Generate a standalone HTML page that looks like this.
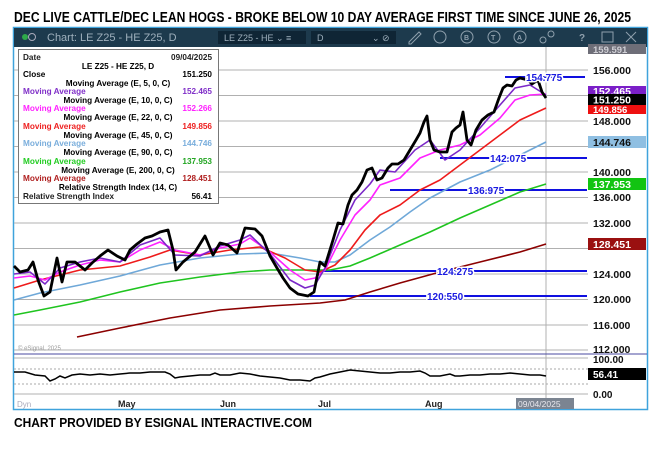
<!DOCTYPE html>
<html><head><meta charset="utf-8"><style>
body{margin:0;background:#fff;width:654px;height:448px;overflow:hidden;font-family:"Liberation Sans",sans-serif}
</style></head><body>
<svg width="654" height="448" viewBox="0 0 654 448" xmlns="http://www.w3.org/2000/svg" font-family="Liberation Sans, sans-serif">
<text x="14" y="22" font-size="14.5" font-weight="bold" textLength="617" lengthAdjust="spacingAndGlyphs">DEC LIVE CATTLE/DEC LEAN HOGS  -  BROKE BELOW 10 DAY AVERAGE FIRST TIME SINCE  JUNE 26, 2025</text>
<rect x="13.5" y="27.5" width="634" height="382" fill="#fff" stroke="#3fa3dc" stroke-width="1.5"/>
<rect x="14" y="28" width="633" height="19" fill="#1d3a4d"/>
<circle cx="25" cy="37" r="3" fill="#2ea84a"/><circle cx="32" cy="37" r="3.5" fill="none" stroke="#aab" stroke-width="1"/>
<text x="47" y="41" font-size="11" fill="#9fb0bd">Chart: LE Z25 - HE Z25, D</text>
<rect x="218" y="31" width="88" height="13" fill="#0f2535"/><text x="224" y="41" font-size="9" fill="#9fb0bd">LE Z25 - HE ⌄ ≡</text>
<rect x="311" y="31" width="85" height="13" fill="#0f2535"/><text x="317" y="41" font-size="9" fill="#9fb0bd">D</text>
<text x="372" y="41" font-size="9" fill="#9fb0bd">⌄ ⊘</text>
<g fill="none" stroke="#8fa0ad" stroke-width="1">
<path d="M409 42l10-10 2 2-10 10h-2z"/>
<circle cx="440" cy="37" r="6"/><circle cx="467" cy="37" r="6"/><circle cx="494" cy="37" r="6"/><circle cx="520" cy="37" r="6"/>
<circle cx="543" cy="40" r="3"/><circle cx="551" cy="34" r="3"/>
<rect x="602" y="32" width="11" height="10"/><path d="M626 32l10 10M636 32l-10 10"/>
</g>
<g font-size="7" fill="#8fa0ad" font-weight="bold"><text x="464" y="40">B</text><text x="491" y="40">T</text><text x="517" y="40">A</text><text x="579" y="41" font-size="10">?</text></g>
<g stroke="#b0b0b0" stroke-width="1">
<line x1="14" y1="70" x2="588" y2="70"/><line x1="14" y1="95.5" x2="588" y2="95.5"/><line x1="14" y1="121" x2="588" y2="121"/><line x1="14" y1="146.5" x2="588" y2="146.5"/><line x1="14" y1="172" x2="588" y2="172"/><line x1="14" y1="197.5" x2="588" y2="197.5"/><line x1="14" y1="223" x2="588" y2="223"/><line x1="14" y1="248.5" x2="588" y2="248.5"/><line x1="14" y1="274" x2="588" y2="274"/><line x1="14" y1="299.5" x2="588" y2="299.5"/><line x1="14" y1="325" x2="588" y2="325"/><line x1="14" y1="350" x2="588" y2="350"/>
<line x1="14" y1="358" x2="588" y2="358"/><line x1="14" y1="394" x2="588" y2="394"/>
<line x1="546" y1="47" x2="546" y2="398"/>
</g>
<line x1="14" y1="354" x2="647" y2="354" stroke="#4a4aa0" stroke-width="1"/>
<g stroke="#aaa" stroke-dasharray="2,2"><line x1="14" y1="369" x2="588" y2="369"/><line x1="14" y1="384" x2="588" y2="384"/></g>
<text x="18" y="350" font-size="6" fill="#999">© eSignal, 2025</text>
<g stroke="#1010e0" stroke-width="2">
<line x1="505" y1="77" x2="585" y2="77"/><line x1="440" y1="158" x2="587" y2="158"/><line x1="390" y1="190" x2="587" y2="190"/><line x1="320" y1="271" x2="587" y2="271"/><line x1="310" y1="296" x2="587" y2="296"/>
</g>
<g fill="none" stroke-width="1.6" stroke-linejoin="round">
<polyline stroke="#8b0000" points="77,337 120,328 170,318 220,310 270,306 320,303 345,300 370,292 400,283 440,272 480,262 520,252 546,244"/>
<polyline stroke="#1fc41f" points="14,315 40,310 80,302 120,292 160,283 200,277 240,272 270,270 300,270 330,270 350,266 370,258 400,245 430,232 460,218 490,205 520,192 546,184"/>
<polyline stroke="#6fa8d8" points="14,300 40,293 80,285 120,276 160,265 200,258 240,254 270,253 300,258 320,262 335,262 350,255 370,240 390,227 410,212 430,198 460,182 490,170 520,155 546,142"/>
<polyline stroke="#ee1b1b" points="14,288 40,280 80,270 120,266 150,257 170,250 200,255 230,250 260,247 285,258 305,270 320,272 335,265 350,250 365,230 380,215 400,205 420,190 440,180 460,165 480,150 500,135 520,120 546,108"/>
<polyline stroke="#ff22ff" points="14,278 30,276 45,280 60,272 80,265 100,260 120,262 140,250 160,242 175,250 200,255 220,248 240,244 250,238 270,252 290,270 305,280 315,278 325,270 340,240 355,215 370,200 380,185 400,178 420,158 440,150 460,145 480,135 500,118 515,100 530,95 546,94"/>
<polyline stroke="#7b28c8" points="14,274 30,272 45,284 60,268 80,262 100,258 120,262 140,245 160,238 175,255 200,256 220,246 240,240 250,235 270,254 290,280 305,288 315,285 325,268 340,230 355,200 370,184 380,170 395,172 415,150 430,140 445,160 460,150 480,128 500,105 515,88 530,85 546,95"/>
<polyline stroke="#000" stroke-width="2.8" points="14,266 20,272 28,270 33,262 38,280 44,296 50,292 57,258 62,282 67,262 75,262 85,270 92,263 100,256 108,250 117,256 125,260 130,250 137,244 145,238 152,236 160,232 168,230 173,250 176,270 183,262 195,252 205,236 213,255 220,243 228,245 237,253 245,228 255,229 262,236 270,256 277,268 283,278 290,288 298,294 308,296 314,292 320,262 325,266 333,240 338,223 343,224 348,205 352,195 357,190 362,182 367,170 372,168 377,180 382,178 388,168 392,164 398,164 404,160 410,150 416,140 420,133 424,122 427,116 430,140 434,150 440,152 447,152 452,132 456,128 460,125 463,112 467,140 471,145 476,130 482,120 488,115 494,112 499,98 503,88 507,85 512,86 516,80 520,78 528,80 532,84 538,80 542,92 546,98"/>
</g>
<g font-size="10" font-weight="bold" fill="#1a1ae0" stroke="#fff" stroke-width="3" paint-order="stroke">
<text x="526" y="81">154.775</text><text x="490" y="162">142.075</text><text x="468" y="194">136.975</text><text x="437" y="275">124.275</text><text x="427" y="300">120.550</text>
</g>
<polyline fill="none" stroke="#000" stroke-width="1.5" points="14,372 25,372 35,375 45,376 50,381 55,379 60,376 65,378 72,375 80,374 90,375 100,374 110,375 120,374 130,373 140,373 150,372 165,372 170,374 175,378 180,377 190,376 200,375 210,375 215,373 220,375 230,375 240,373 250,374 260,376 270,377 280,378 290,380 300,380 310,381 315,378 320,377 330,374 340,372 350,370 360,371 370,372 380,373 390,373 400,372 410,372 420,371 425,373 430,376 440,376 450,374 455,376 460,376 470,375 480,375 490,374 500,374 510,373 520,374 530,375 540,375 546,376"/>
<g font-size="10.5" font-weight="bold">
<rect x="588" y="44" width="58" height="10" fill="#6e6e78"/><text x="593" y="53" fill="#d0d0d6" font-size="9.5">159.591</text>
<g fill="#111"><text x="593" y="74">156.000</text><text x="593" y="125">148.000</text><text x="593" y="176">140.000</text><text x="593" y="201">136.000</text><text x="593" y="227">132.000</text><text x="593" y="278">124.000</text><text x="593" y="303">120.000</text><text x="593" y="329">116.000</text><text x="593" y="353">112.000</text><text x="593" y="363" font-size="10">100.00</text><text x="593" y="398" font-size="10">0.00</text></g>
<rect x="588" y="86" width="58" height="9" fill="#7b1fc8"/><text x="593" y="95" fill="#fff">152.465</text>
<rect x="588" y="94" width="58" height="11" fill="#000"/><text x="593" y="103.5" fill="#fff">151.250</text>
<rect x="588" y="105" width="58" height="9" fill="#ee1010"/><text x="593" y="113" fill="#fff" font-size="9.5">149.856</text>
<rect x="588" y="136" width="58" height="12" fill="#8fbfe2"/><text x="593" y="146" fill="#111">144.746</text>
<rect x="588" y="178" width="58" height="12" fill="#12c412"/><text x="593" y="188" fill="#fff">137.953</text>
<rect x="588" y="238" width="58" height="12" fill="#9a1010"/><text x="593" y="248" fill="#fff">128.451</text>
<rect x="588" y="368" width="58" height="12" fill="#000"/><text x="593" y="378" fill="#fff" font-size="10">56.41</text>
</g>
<g font-size="9" font-weight="bold" fill="#222"><text x="118" y="407">May</text><text x="220" y="407">Jun</text><text x="318" y="407">Jul</text><text x="425" y="407">Aug</text></g>
<text x="17" y="407" font-size="8" fill="#aab">Dyn</text>
<rect x="516" y="398" width="58" height="11" fill="#7b8491"/><text x="518" y="407" font-size="8.5" fill="#e8e8ee">09/04/2025</text>
<text x="14" y="427" font-size="12.5" font-weight="bold" textLength="298" lengthAdjust="spacingAndGlyphs">CHART PROVIDED BY ESIGNAL INTERACTIVE.COM</text>
<rect x="18.5" y="49.5" width="200" height="154" fill="#fff" stroke="#777"/>
<g font-size="8.2" font-weight="bold">
<text x="23" y="60" fill="#222">Date</text><text x="212" y="60" text-anchor="end" fill="#222">09/04/2025</text>
<text x="118" y="69" text-anchor="middle">LE Z25 - HE Z25, D</text>
<text x="23" y="77">Close</text><text x="212" y="77" text-anchor="end">151.250</text>
<text x="118" y="86" text-anchor="middle">Moving Average (E, 5, 0, C)</text>
<text x="23" y="94" fill="#8030c8">Moving Average</text><text x="212" y="94" text-anchor="end" fill="#8030c8">152.465</text>
<text x="118" y="103" text-anchor="middle">Moving Average (E, 10, 0, C)</text>
<text x="23" y="111" fill="#ff22ff">Moving Average</text><text x="212" y="111" text-anchor="end" fill="#ff22ff">152.266</text>
<text x="118" y="120" text-anchor="middle">Moving Average (E, 22, 0, C)</text>
<text x="23" y="129" fill="#ee2020">Moving Average</text><text x="212" y="129" text-anchor="end" fill="#ee2020">149.856</text>
<text x="118" y="138" text-anchor="middle">Moving Average (E, 45, 0, C)</text>
<text x="23" y="146" fill="#7aaedc">Moving Average</text><text x="212" y="146" text-anchor="end" fill="#7aaedc">144.746</text>
<text x="118" y="155" text-anchor="middle">Moving Average (E, 90, 0, C)</text>
<text x="23" y="164" fill="#22cc22">Moving Average</text><text x="212" y="164" text-anchor="end" fill="#22a522">137.953</text>
<text x="118" y="173" text-anchor="middle">Moving Average (E, 200, 0, C)</text>
<text x="23" y="181" fill="#b02020">Moving Average</text><text x="212" y="181" text-anchor="end" fill="#b02020">128.451</text>
<text x="118" y="190" text-anchor="middle">Relative Strength Index (14, C)</text>
<text x="23" y="199" fill="#222">Relative Strength Index</text><text x="212" y="199" text-anchor="end">56.41</text>
</g>
</svg>
</body></html>
